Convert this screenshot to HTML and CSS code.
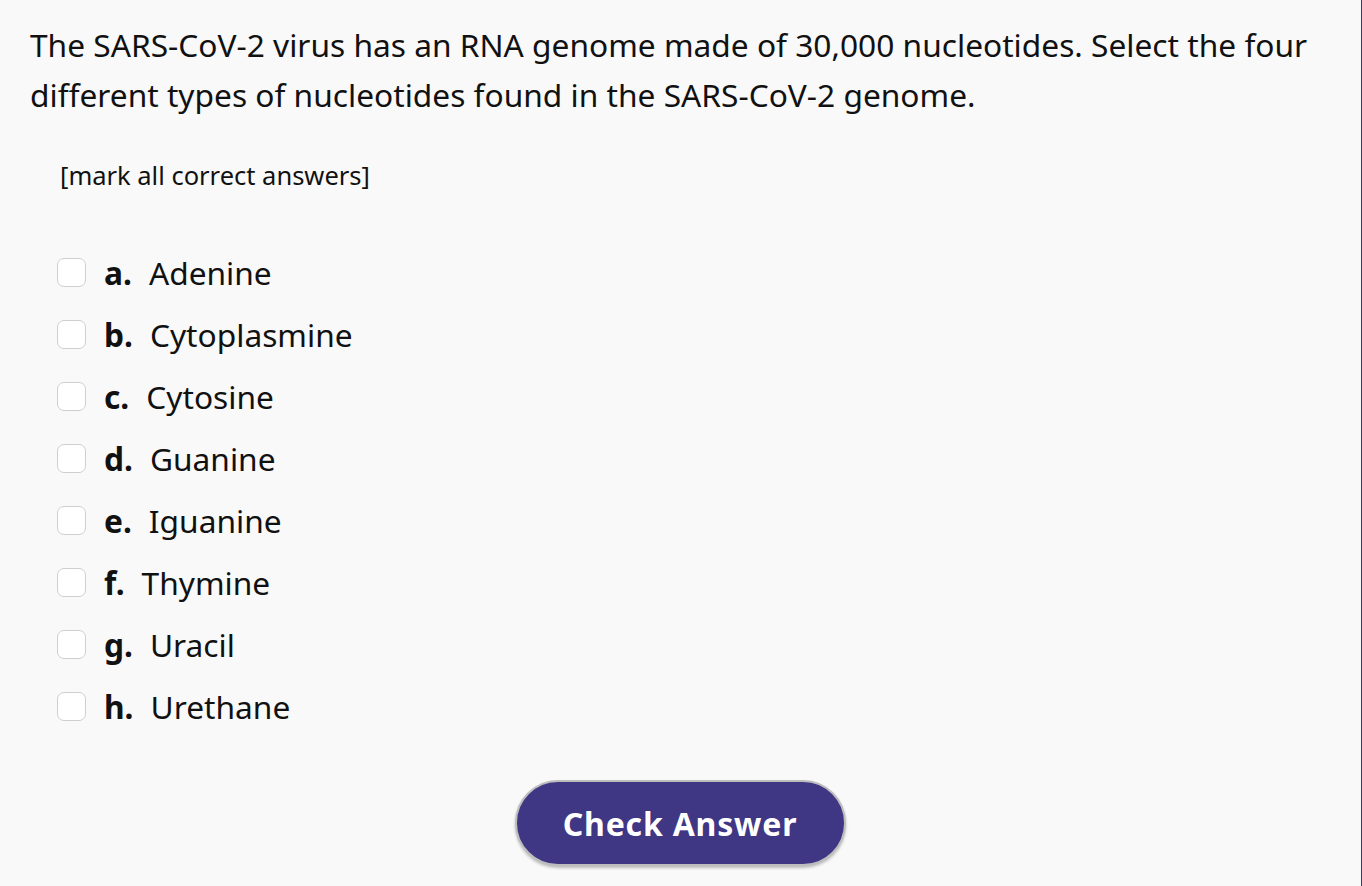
FILE: index.html
```html
<!DOCTYPE html>
<html lang="en">
<head>
<meta charset="utf-8">
<title>Question</title>
<link rel="stylesheet" href="styles.css">
</head>
<body>
<main class="page">
  <p class="question">The SARS-CoV-2 virus has an RNA genome made of 30,000 nucleotides. Select the four different types of nucleotides found in the SARS-CoV-2 genome.</p>
  <p class="instructions">[mark all correct answers]</p>
  <ul class="options">
    <li class="option"><span class="box"></span><span class="letter">a.</span><span class="label">Adenine</span></li>
    <li class="option"><span class="box"></span><span class="letter">b.</span><span class="label">Cytoplasmine</span></li>
    <li class="option"><span class="box"></span><span class="letter">c.</span><span class="label">Cytosine</span></li>
    <li class="option"><span class="box"></span><span class="letter">d.</span><span class="label">Guanine</span></li>
    <li class="option"><span class="box"></span><span class="letter">e.</span><span class="label">Iguanine</span></li>
    <li class="option"><span class="box"></span><span class="letter">f.</span><span class="label">Thymine</span></li>
    <li class="option"><span class="box"></span><span class="letter">g.</span><span class="label">Uracil</span></li>
    <li class="option"><span class="box"></span><span class="letter">h.</span><span class="label">Urethane</span></li>
  </ul>
  <div class="actions"><button class="check">Check Answer</button></div>
</main>
</body>
</html>
```
FILE: styles.css
```css
html, body {
  margin: 0;
  height: 100%;
}
body {
  background: #f9f9f9;
  font-family: "Noto Sans", "Open Sans", sans-serif;
  color: #111;
  border-right: 1px solid #3e3582;
  box-sizing: border-box;
}
.page {
  padding: 20px 30px 0 30px;
}
.question {
  margin: 0;
  font-size: 31.7px;
  line-height: 50px;
  width: 1300px;
}
.instructions {
  margin: 40px 0 0 30px;
  font-size: 25.5px;
  line-height: 30px;
}
.options {
  list-style: none;
  margin: 61px 0 0 27px;
  padding: 0;
  display: flex;
  flex-direction: column;
  gap: 20px;
}
.option {
  display: flex;
  align-items: center;
  height: 42px;
  font-size: 31.7px;
}
.box {
  width: 29px;
  height: 29px;
  border: 1.5px solid #cfcfcf;
  border-radius: 7px;
  background: #fff;
  margin-right: 18px;
  box-sizing: border-box;
}
.letter {
  font-weight: 700;
  margin-right: 17px;
}
.actions {
  display: flex;
  justify-content: center;
  margin-top: 53px;
}
.check {
  width: 331px;
  height: 86px;
  border-radius: 43px;
  background: #3f3684;
  border: 2px solid #bdbdbd;
  box-shadow: 0 2px 3px rgba(0,0,0,0.25);
  color: #fff;
  font-family: "Noto Sans", sans-serif;
  font-weight: 700;
  font-size: 32px;
  letter-spacing: 0.8px;
  margin-left: -1px;
}
```
